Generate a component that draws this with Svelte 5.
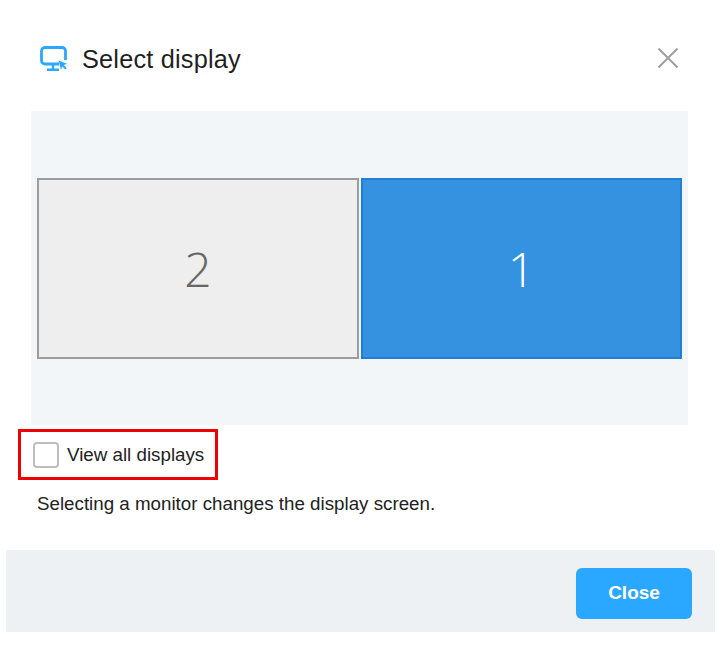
<script>
  const displays = [
    { id: 2, active: false },
    { id: 1, active: true }
  ];
</script>

<div class="dialog">
  <header class="head">
    <svg class="icon" width="28" height="26" viewBox="0 0 28 26" fill="none" aria-hidden="true">
      <path d="M19 18H5a3.500 3.500 0 0 1-3.500-3.500V5A3.500 3.500 0 0 1 5 1.500h17A3.500 3.500 0 0 1 25.500 5v9" stroke="#2aa7ff" stroke-width="2.800"/>
      <path d="M13 18v5M7 23.800h12" stroke="#2aa7ff" stroke-width="2.400"/>
      <path d="M18.500 14.500l8.500 3.200-3.200 1.300 3 3-1.500 1.500-3-3-1.300 3.200z" fill="#2aa7ff"/>
    </svg>
    <h1>Select display</h1>
    <svg class="x" width="20" height="20" viewBox="0 0 20 20" aria-hidden="true">
      <path d="M.5.500l19 19M19.500.500l-19 19" stroke="#a0a0a0" stroke-width="2"/>
    </svg>
  </header>

  <section class="preview">
    <div class="screens">
      {#each displays as d}
        <div class="screen" class:active={d.active}>{d.id}</div>
      {/each}
    </div>
  </section>

  <label class="check">
    <span class="box"></span>
    <span class="label">View all displays</span>
  </label>

  <p class="hint">Selecting a monitor changes the display screen.</p>

  <footer class="foot">
    <button>Close</button>
  </footer>
</div>

<style>
  :global(body) {
    margin: 0;
    background: #fff;
  }
  .dialog {
    width: 726px;
    height: 650px;
    box-sizing: border-box;
    padding-top: 40px;
    font-family: "Liberation Sans", Arial, sans-serif;
    color: #222;
    display: flex;
    flex-direction: column;
  }
  .head {
    height: 38px;
    display: flex;
    align-items: center;
    padding: 0 47px 0 40px;
  }
  .icon { flex: none; }
  h1 {
    margin: 0 0 0 14px;
    flex: 1;
    font-size: 25.300px;
    font-weight: 400;
    color: #1f1f1f;
    letter-spacing: 0.2px;
  }
  .x {
    flex: none;
    margin: 0 1px 2px 0;
  }
  .preview {
    margin: 33px 38px 0 31px;
    height: 314px;
    background: #f2f6f9;
    padding: 67px 6px 0;
    box-sizing: border-box;
  }
  .screens {
    display: grid;
    grid-template-columns: 322px 321px;
    gap: 2px;
  }
  .screen {
    height: 181px;
    box-sizing: border-box;
    border: 2px solid #9c9c9c;
    background: #eeeeee;
    color: #666;
    display: flex;
    align-items: center;
    justify-content: center;
    font-family: "Open Sans", sans-serif;
    font-weight: 350;
    font-size: 48px;
  }
  .active {
    border-color: #1f7fd8;
    background: #3492e1;
    color: #fff;
  }
  .check {
    margin: 4px 0 0 18px;
    width: 200px;
    height: 51px;
    box-sizing: border-box;
    border: 3px solid #f00000;
    display: flex;
    align-items: center;
    padding-left: 12px;
    gap: 8px;
    font-size: 18.750px;
    color: #222;
  }
  .label { padding-top: 1px; }
  .box {
    width: 26px;
    height: 26px;
    box-sizing: border-box;
    border: 2px solid #bdbdbd;
    border-radius: 4px;
    background: #fff;
    flex: none;
  }
  .hint {
    margin: 13px 0 0 37px;
    font-size: 18.750px;
    line-height: 21px;
    color: #222;
  }
  .foot {
    margin: 36px 11px 0 6px;
    height: 82px;
    box-sizing: border-box;
    padding: 4px 23px 0 0;
    background: #eef1f3;
    display: flex;
    align-items: center;
    justify-content: flex-end;
  }
  button {
    width: 116px;
    height: 51px;
    border: 0;
    border-radius: 6px;
    background: #2aa7ff;
    color: #fff;
    font-family: "Liberation Sans", Arial, sans-serif;
    font-weight: 700;
    font-size: 19px;
  }
</style>
